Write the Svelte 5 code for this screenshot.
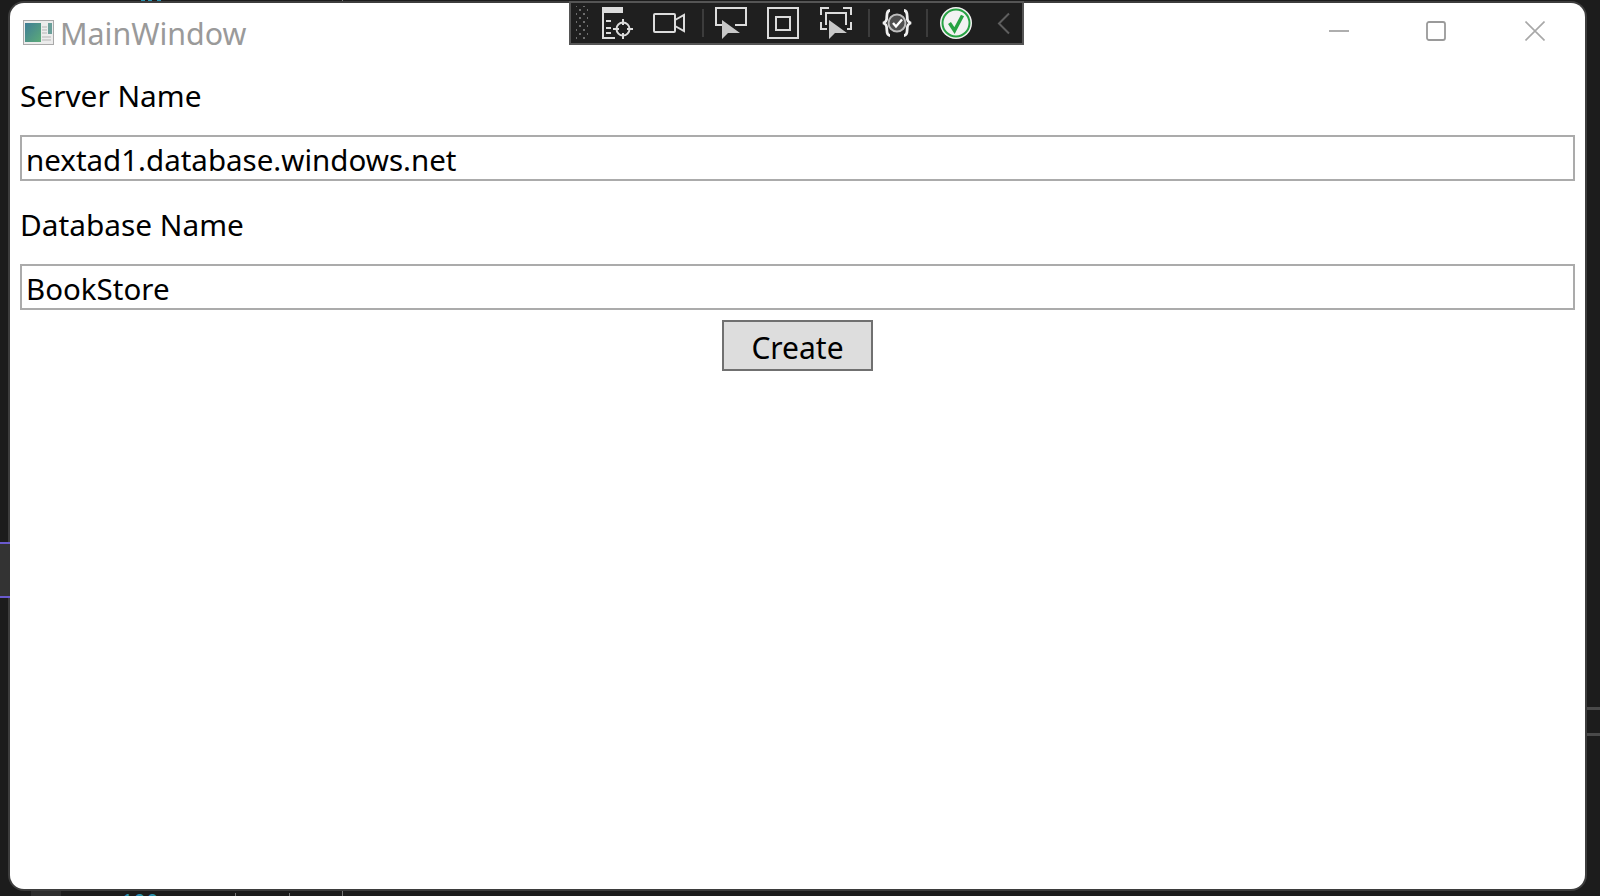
<script>
  let serverName = $state('nextad1.database.windows.net');
  let databaseName = $state('BookStore');
</script>

<div class="desktop">
  <!-- editor remnants showing around the window -->
  <span class="top-glyphs"></span>
  <span class="left-band"></span>
  <span class="right-line one"></span>
  <span class="right-line two"></span>
  <span class="bottom-tab"></span>
  <span class="bottom-num">100</span>
  <span class="tick t1"></span>
  <span class="tick t2"></span>
  <span class="tick t3"></span>
  <span class="tick t4"></span>

  <div class="window">
    <header class="titlebar">
      <svg class="app-icon" width="32" height="28" viewBox="0 0 32 28">
        <defs>
          <linearGradient id="pane" x1="0" y1="0" x2="1" y2="1">
            <stop offset="0" stop-color="#3f7d96" />
            <stop offset="1" stop-color="#5cab78" />
          </linearGradient>
        </defs>
        <rect x="0.5" y="1.5" width="30" height="24" fill="#ececec" stroke="#a9a9a9" />
        <rect x="2" y="4" width="16" height="19" fill="url(#pane)" />
        <rect x="25" y="4" width="4" height="11" fill="#6a9f9a" />
        <path d="M19 8h5M19 11h5M19 14h5M19 18h9M19 21h9" stroke="#b5b5b5" stroke-width="1" />
      </svg>
      <span class="title">MainWindow</span>
      <div class="controls">
        <svg width="20" height="20" viewBox="0 0 20 20"><path d="M0 10h20" stroke="#9a9a9a" stroke-width="1.6" /></svg>
        <svg class="max" width="20" height="20" viewBox="0 0 20 20"><rect x="1" y="1" width="18" height="18" rx="2" fill="none" stroke="#9a9a9a" stroke-width="1.8" /></svg>
        <svg class="close" width="20" height="20" viewBox="0 0 20 20"><path d="M0.5 0.5l19 19M19.5 0.5l-19 19" stroke="#a8a8a8" stroke-width="1.6" /></svg>
      </div>
    </header>

    <main class="form">
      <label for="server">Server Name</label>
      <input id="server" bind:value={serverName} />
      <label for="database">Database Name</label>
      <input id="database" bind:value={databaseName} />
      <button type="button">Create</button>
    </main>

    <div class="toolbar">
      <span class="grip"></span>
      <svg class="tool" width="36" height="36" viewBox="0 0 36 36" fill="none" stroke="#dcdcdc" stroke-width="2">
        <path d="M3 8v25h12" />
        <path d="M2 2h21v6H2z" fill="#dcdcdc" stroke="none" />
        <path d="M6 16h5M6 23h5M6 28h5" />
        <circle cx="23" cy="24" r="6.500" />
        <path d="M23 14v6M23 28v6M13 24h6M27 24h6" />
      </svg>
      <svg class="tool" width="36" height="36" viewBox="0 0 36 36" fill="none" stroke="#dcdcdc" stroke-width="2">
        <rect x="2" y="9" width="21" height="18" rx="1" />
        <path d="M23 15l9-5v16l-9-5" />
      </svg>
      <span class="sep"></span>
      <svg class="tool" width="36" height="36" viewBox="0 0 36 36" fill="none" stroke="#dcdcdc" stroke-width="2">
        <path d="M9 20H2V3h30v17H21" />
        <path d="M8 15v19l6-6h12z" fill="#c8c8c8" stroke="none" />
      </svg>
      <svg class="tool" width="36" height="36" viewBox="0 0 36 36" fill="none" stroke="#dcdcdc" stroke-width="2">
        <rect x="2" y="3" width="30" height="30" />
        <rect x="10" y="12" width="14" height="13" />
      </svg>
      <svg class="tool" width="36" height="36" viewBox="0 0 36 36" fill="none" stroke="#dcdcdc" stroke-width="2">
        <path d="M3 10V3h8M25 3h8v7M3 17v7h6M33 17v7h-4" />
        <path d="M8 20V8h20v12" />
        <path d="M11 15v19l6-6h12z" fill="#c8c8c8" stroke="none" />
      </svg>
      <span class="sep"></span>
      <svg class="tool" width="36" height="36" viewBox="0 0 36 36" fill="none" stroke="#f0f0f0" stroke-width="2.800">
        <path d="M10 5.500c-5 0-2 8-4 10.500-1 1.500-3 2-3 2s2 .5 3 2c2 2.500-1 10.500 4 10.500M24 5.500c5 0 2 8 4 10.500 1 1.500 3 2 3 2s-2 .5-3 2c-2 2.500 1 10.500-4 10.500" />
        <circle cx="17" cy="18" r="8.500" fill="#4f4f4f" stroke="#bdbdbd" stroke-width="2" />
        <path d="M13 18l3 3.500 6-7" stroke="#fff" stroke-width="2.400" />
      </svg>
      <span class="sep short-before"></span>
      <svg class="tool" width="36" height="36" viewBox="0 0 36 36">
        <circle cx="18" cy="18" r="16" fill="#f2f2f2" />
        <circle cx="18" cy="18" r="13.500" fill="none" stroke="#27a243" stroke-width="2" />
        <path d="M11.500 18l5 7.500 8-15" fill="none" stroke="#27a243" stroke-width="3.500" />
      </svg>
      <svg class="chevron" width="14" height="24" viewBox="0 0 14 24"><path d="M12 2.500L2 12.500l10 10" fill="none" stroke="#5e5e5e" stroke-width="2" /></svg>
    </div>
  </div>
</div>

<style>
  :global(body) {
    margin: 0;
    background: #1c1c1c;
  }
  .desktop {
    position: relative;
    box-sizing: border-box;
    width: 1600px;
    height: 896px;
    padding: 3px 15px 7px 10px;
    overflow: hidden;
    background: #1c1c1c;
    font-family: "Noto Sans", "Open Sans", sans-serif;
  }
  .top-glyphs {
    position: absolute;
    left: 141px;
    top: 0;
    width: 20px;
    height: 2px;
    background: linear-gradient(90deg, #2b91af 0 4px, transparent 4px 7px, #2b91af 7px 11px, transparent 11px 16px, #2b91af 16px 20px);
  }
  .left-band {
    position: absolute;
    z-index: 1;
    left: 0;
    top: 542px;
    width: 10px;
    height: 56px;
    box-sizing: border-box;
    background: #333333;
    border-top: 2px solid #6a5acd;
    border-bottom: 2px solid #6a5acd;
  }
  .right-line {
    position: absolute;
    left: 1586px;
    width: 14px;
    height: 3px;
    background: #4a4a4a;
  }
  .right-line.one { top: 707px; }
  .right-line.two { top: 733px; }
  .bottom-tab {
    position: absolute;
    left: 31px;
    top: 889px;
    width: 30px;
    height: 7px;
    background: #2e2e2e;
  }
  .bottom-num {
    position: absolute;
    left: 121px;
    top: 889px;
    color: #2b91af;
    font-size: 22px;
    line-height: 24px;
  }
  .tick {
    position: absolute;
    top: 893px;
    width: 1px;
    height: 3px;
    background: #777;
  }
  .t1 { left: 235px; }
  .t2 { left: 289px; }
  .t3 { left: 342px; top: 889px; height: 7px; }
  .t4 { left: 342px; top: 0; height: 3px; }
  .window {
    position: relative;
    height: 100%;
    box-sizing: border-box;
    background: #fff;
    border-radius: 14px;
    box-shadow: 0 0 0 2px #3d3d3d;
    color: #000;
  }
  .titlebar {
    display: flex;
    align-items: center;
    height: 62px;
    padding-left: 13px;
    color: #9a9a9a;
  }
  .app-icon {
    margin-right: 5px;
    margin-top: -2px;
  }
  .title {
    font-size: 30.400px;
    line-height: 1;
  }
  .controls {
    display: flex;
    margin-left: auto;
    padding-right: 40px;
    margin-top: -6px;
  }
  .controls .max {
    margin-left: 77px;
  }
  .controls .close {
    margin-left: 79px;
  }
  .form {
    display: flex;
    flex-direction: column;
    padding: 0 10px;
  }
  label {
    font-size: 29.800px;
    line-height: 40px;
    margin-top: 11px;
    margin-bottom: 19px;
  }
  label[for="database"] {
    margin-top: 24px;
  }
  input {
    box-sizing: border-box;
    width: 100%;
    height: 46px;
    padding: 3px 4px 0;
    border: 2px solid #ababab;
    font: inherit;
    font-size: 29.500px;
    color: #000;
    background: #fff;
    outline: none;
  }
  button {
    box-sizing: border-box;
    align-self: center;
    width: 151px;
    height: 51px;
    margin-top: 10px;
    border: 2px solid #707070;
    background: #dddddd;
    font: inherit;
    font-size: 30px;
    color: #000;
    padding: 3px 0 0;
  }
  .toolbar {
    position: absolute;
    left: 559px;
    top: -2px;
    box-sizing: border-box;
    display: flex;
    align-items: center;
    width: 455px;
    height: 44px;
    padding: 0 0 0 5px;
    background: #1f1f1f;
    border: 2px solid #555;
  }
  .grip {
    flex: none;
    width: 12px;
    height: 34px;
    margin-right: -4px;
    background-image:
      radial-gradient(#6e6e6e 1px, transparent 1.200px),
      radial-gradient(#6e6e6e 1px, transparent 1.200px);
    background-size: 8px 8px;
    background-position: 0 0, 4px 4px;
  }
  .tool {
    margin-left: 16px;
    flex: none;
  }
  .sep {
    flex: none;
    width: 2px;
    height: 28px;
    margin-left: 14px;
    background: #3c3c3c;
  }
  .sep + .tool {
    margin-left: 10px;
  }
  .sep.short-before {
    margin-left: 10px;
  }
  .chevron {
    flex: none;
    margin-left: 23px;
  }
</style>
